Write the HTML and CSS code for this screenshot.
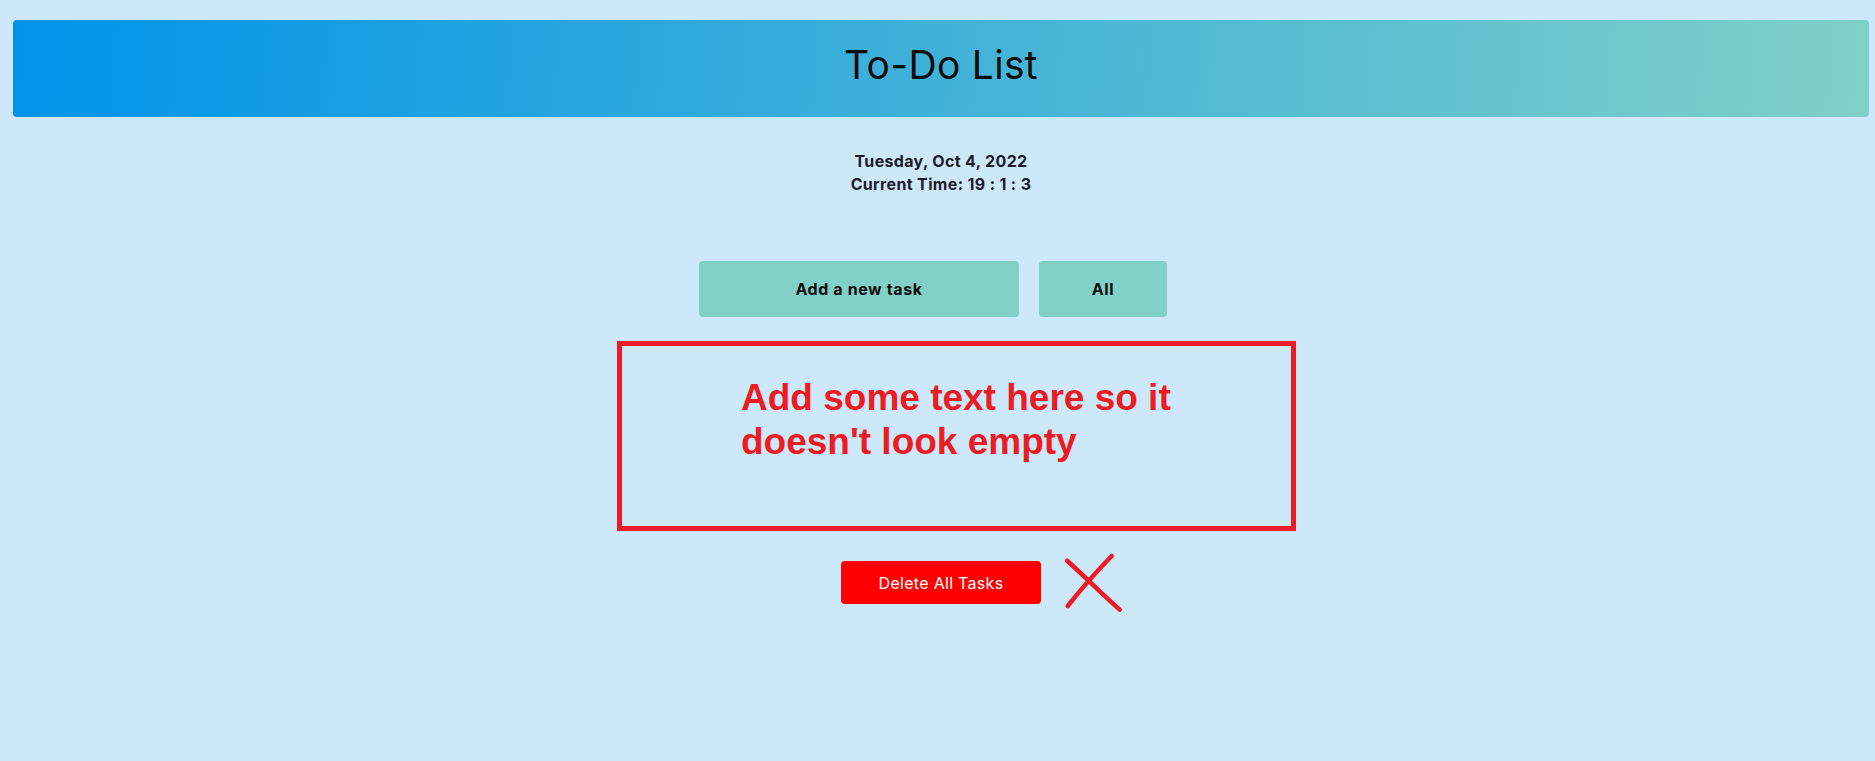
FILE: index.html
```html
<!DOCTYPE html>
<html lang="en">
<head>
<meta charset="utf-8">
<title>To-Do List</title>
<link rel="stylesheet" href="styles.css">
</head>
<body>
  <header class="banner">
    <h1 class="banner-title">To-Do List</h1>
  </header>
  <main class="app">
    <div class="clock">
      <p class="clock-line">Tuesday, Oct 4, 2022</p>
      <p class="clock-line">Current Time: 19 : 1 : 3</p>
    </div>
    <div class="actions">
      <button class="btn btn-add" type="button">Add a new task</button>
      <button class="btn btn-filter" type="button">All</button>
    </div>
    <section class="task-list">
      <p class="note">Add some text here so it<br>doesn't look empty</p>
    </section>
    <div class="footer-row">
      <button class="btn-delete" type="button">Delete All Tasks</button>
      <svg class="cross" width="70" height="70" viewBox="0 0 70 70" aria-hidden="true">
        <path d="M7 10.7 C 20 22, 40 42, 59.7 59.7" fill="none" stroke="#ed1c24" stroke-width="4.5" stroke-linecap="round"/>
        <path d="M51.7 6 C 38 20, 22 38, 7.7 56" fill="none" stroke="#ed1c24" stroke-width="4.5" stroke-linecap="round"/>
      </svg>
    </div>
  </main>
</body>
</html>
```
FILE: styles.css
```css
* { box-sizing: border-box; }

html, body {
  margin: 0;
  padding: 0;
  background: #cde8f9;
  font-family: Inter, "DejaVu Sans", sans-serif;
  color: #1c1c28;
}

.banner {
  margin: 20px 6px 0 13px;
  height: 97px;
  border-radius: 4px;
  background: linear-gradient(95deg, #0093e9 0%, #80d0c7 100%);
  display: flex;
  align-items: center;
  justify-content: center;
}

.banner-title {
  margin: 0 0 8px 0;
  font-size: 39px;
  font-weight: 400;
  color: #0b0b0b;
  letter-spacing: 0.3px;
}

.app {
  margin: 0 6px 0 13px;
  padding-bottom: 40px;
  display: flex;
  flex-direction: column;
  align-items: center;
}

.clock {
  margin-top: 33px;
  text-align: center;
}

.clock-line {
  margin: 0;
  font-size: 16px;
  font-weight: 700;
  line-height: 23px;
  letter-spacing: 0.35px;
}

.actions {
  margin-top: 65px;
  margin-right: 16px;
  display: flex;
  gap: 20px;
}

.btn {
  height: 56px;
  border: none;
  border-radius: 4px;
  background: #80d0c7;
  color: #0b0b0b;
  font-family: Inter, "DejaVu Sans", sans-serif;
  font-size: 16px;
  font-weight: 700;
  letter-spacing: 0.6px;
}

.btn-add { width: 320px; }
.btn-filter { width: 128px; }

.task-list {
  margin-top: 24px;
  margin-left: 31px;
  width: 679px;
  height: 190px;
  border: 5px solid #ed1c24;
  padding: 30px 0 0 119px;
}

.note {
  margin: 0;
  font-family: "Liberation Sans", Arial, sans-serif;
  font-size: 37px;
  font-weight: 700;
  line-height: 44px;
  color: #ed1c24;
}

.footer-row {
  margin-top: 30px;
  margin-right: -89px;
  display: flex;
  align-items: flex-start;
  gap: 19px;
}

.btn-delete {
  flex: none;
  width: 200px;
  height: 43px;
  border: none;
  border-radius: 4px;
  background: #ff0000;
  color: #ffffff;
  font-family: Inter, "DejaVu Sans", sans-serif;
  font-size: 16px;
  font-weight: 400;
  letter-spacing: 0.3px;
}

.cross {
  flex: none;
  display: block;
  margin-top: -11px;
  overflow: visible;
}
```
